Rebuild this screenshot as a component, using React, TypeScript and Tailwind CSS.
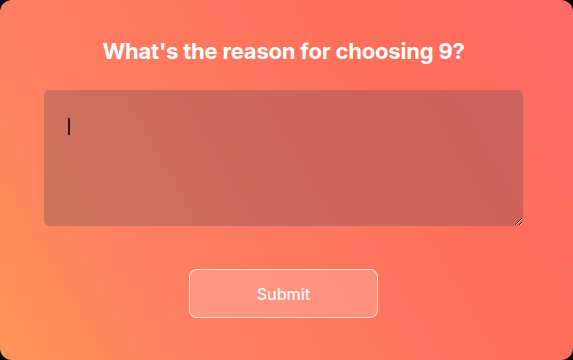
import React from "react";

export default function App() {
  return (
    <div className="w-[573px] h-[360px] bg-black" style={{ fontFamily: "Inter, 'Noto Sans', sans-serif" }}>
      <div className="w-full h-full rounded-xl bg-[linear-gradient(60deg,#ff9456_0%,#ff7f62_27%,#ff6e5c_73%,#ff6a66_100%)] flex flex-col items-center pl-[44px] pr-[50px] pt-[36px]">
        <h1 className="text-white font-bold text-[22px] leading-[30px] tracking-[-0.2px]">
          What's the reason for choosing 9?
        </h1>
        <div className="relative mt-[24px] w-full h-[136px]">
          <textarea
            className="block w-full h-full rounded-md bg-gray-700/25 px-6 pt-[22px] text-base leading-6 text-white outline-none"
          />
          <span className="absolute left-[24px] top-[28px] w-[2px] h-[17px] bg-[#3a0f1c] pointer-events-none" />
        </div>
        <button className="mt-[43px] w-[189px] h-[49px] rounded-lg border border-white/70 bg-white/20 text-white/90 text-base font-medium">
          Submit
        </button>
      </div>
    </div>
  );
}
